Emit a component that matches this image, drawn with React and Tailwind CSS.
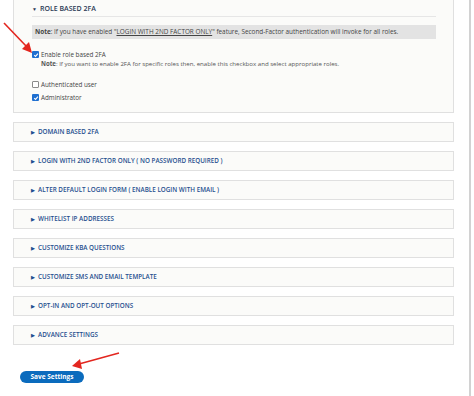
import React from "react";

const sections = [
  "DOMAIN BASED 2FA",
  "LOGIN WITH 2ND FACTOR ONLY ( NO PASSWORD REQUIRED )",
  "ALTER DEFAULT LOGIN FORM ( ENABLE LOGIN WITH EMAIL )",
  "WHITELIST IP ADDRESSES",
  "CUSTOMIZE KBA QUESTIONS",
  "CUSTOMIZE SMS AND EMAIL TEMPLATE",
  "OPT-IN AND OPT-OUT OPTIONS",
  "ADVANCE SETTINGS",
];

function Box({ checked }) {
  return checked ? (
    <span className="w-[7px] h-[7px] rounded-[1px] bg-[#1f6fd0] flex items-center justify-center shrink-0">
      <svg width="6" height="6" viewBox="0 0 10 10">
        <path d="M2 5.2 L4.2 7.4 L8.2 2.6" stroke="white" strokeWidth="1.8" fill="none" />
      </svg>
    </span>
  ) : (
    <span className="w-[7px] h-[7px] rounded-[1px] border border-[#8a8a8a] bg-white shrink-0" />
  );
}

export default function App() {
  return (
    <div
      className="relative w-[474px] h-[396px] bg-white overflow-hidden"
      style={{ fontFamily: '"Open Sans", "Noto Sans", sans-serif' }}
    >
      <div className="w-[471px] h-[396px] border-r-2 border-[#d2d2d2] pl-[13px] pr-[15px]">
        {/* expanded panel */}
        <div className="h-[113px] border border-t-0 border-[#e0e0e0] bg-[#fbfbf9] pl-[18px] pr-[17px] pt-[3px]">
          <div className="h-[14px] flex items-center gap-[3px] border-b border-[#e6e6e6] text-[7px] text-[#2b3a55] font-semibold">
            <span className="text-[5px]">▼</span>
            <span>ROLE BASED 2FA</span>
          </div>
          <div className="mt-[8px] h-[14px] bg-[#e3e3e3] flex items-center pl-[3px] text-[6.4px] text-[#444] whitespace-nowrap">
            <span className="font-bold">Note</span>: If you have enabled "<span className="underline">LOGIN WITH 2ND FACTOR ONLY</span>" feature, Second-Factor authentication will invoke for all roles.
          </div>
          <div className="mt-[11px] flex items-center gap-[2px] text-[6.3px] text-[#444] h-[9px]">
            <Box checked />
            <span>Enable role based 2FA</span>
          </div>
          <div className="pl-[9px] text-[6.1px] text-[#555] leading-[10px] whitespace-nowrap">
            <span className="font-bold">Note</span>: If you want to enable 2FA for specific roles then, enable this checkbox and select appropriate roles.
          </div>
          <div className="mt-[11px] flex items-center gap-[2px] text-[6.3px] text-[#444] h-[9px]">
            <Box />
            <span>Authenticated user</span>
          </div>
          <div className="mt-[4px] flex items-center gap-[2px] text-[6.3px] text-[#444] h-[9px]">
            <Box checked />
            <span>Administrator</span>
          </div>
        </div>

        {/* collapsed panels */}
        <div className="mt-[9px] flex flex-col gap-[9px]">
          {sections.map((s) => (
            <div
              key={s}
              className="h-[20px] border border-[#e0e0e0] bg-[#fbfbf9] flex items-center pl-[17px] gap-[3px] text-[6.3px] text-[#1f4f8f] font-semibold whitespace-nowrap"
            >
              <span className="text-[4.5px]">▶</span>
              <span>{s}</span>
            </div>
          ))}
        </div>

        <div className="mt-[26px] pl-[7px]">
          <button className="w-[64px] h-[12px] rounded-full bg-[#0b6bbd] text-white text-[6.5px] font-bold flex items-center justify-center">
            Save Settings
          </button>
        </div>
      </div>

      {/* annotation arrows */}
      <svg className="absolute left-0 top-0" width="474" height="396" viewBox="0 0 474 396">
        <line x1="4" y1="23" x2="27" y2="47" stroke="#e3261f" strokeWidth="1.6" />
        <polygon points="32,53 22,49 29,42" fill="#e3261f" />
        <line x1="119" y1="353" x2="79" y2="364" stroke="#e3261f" strokeWidth="1.6" />
        <polygon points="72,366 80,359 82,369" fill="#e3261f" />
      </svg>
    </div>
  );
}
